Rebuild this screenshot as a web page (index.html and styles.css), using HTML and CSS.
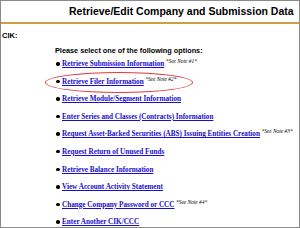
FILE: index.html
```html
<!DOCTYPE html>
<html lang="en">
<head>
    <meta charset="UTF-8">
    <title>Retrieve/Edit Company and Submission Data</title>
    <link rel="stylesheet" href="styles.css">
</head>
<body>
<div class="frame">
    <div class="header">
        <h1>Retrieve/Edit Company and Submission Data</h1>
    </div>
    <div class="cik">CIK:</div>
    <p class="prompt">Please select one of the following options:</p>
    <ul class="options">
        <li><a href="#">Retrieve Submission Information</a><sup>*See Note #1*</sup></li>
        <li><a href="#">Retrieve Filer Information</a><sup>*See Note #2*</sup><span class="ring"></span></li>
        <li><a href="#">Retrieve Module/Segment Information</a></li>
        <li><a href="#">Enter Series and Classes (Contracts) Information</a></li>
        <li><a href="#">Request Asset-Backed Securities (ABS) Issuing Entities Creation</a><sup>*See Note #3*</sup></li>
        <li><a href="#">Request Return of Unused Funds</a></li>
        <li><a href="#">Retrieve Balance Information</a></li>
        <li><a href="#">View Account Activity Statement</a></li>
        <li><a href="#">Change Company Password or CCC</a><sup>*See Note #4*</sup></li>
        <li><a href="#">Enter Another CIK/CCC</a></li>
    </ul>
</div>
</body>
</html>
```

FILE: styles.css
```css
html, body {
    margin: 0;
    padding: 0;
    background: #fff;
}
.frame {
    width: 298px;
    height: 226px;
    border: 1px solid #8a8a8a;
    border-right-width: 2px;
    overflow: hidden;
    font-family: "Liberation Sans", Arial, sans-serif;
}
.header {
    height: 21px;
    border-bottom: 2px solid #c9a13f;
    padding-left: 68px;
}
h1 {
    margin: 0;
    font-size: 10.5px;
    line-height: 20px;
    font-weight: bold;
    color: #000;
}
.cik {
    font-size: 7.5px;
    font-weight: bold;
    margin: 7px 0 0 1px;
}
.prompt {
    font-size: 7.3px;
    font-weight: bold;
    margin: 6px 0 0 54px;
}
.options {
    list-style: none;
    margin: 1px 0 0 0;
    padding: 0 0 0 55px;
}
.options li {
    position: relative;
    height: 17.6px;
    line-height: 17.6px;
    font-family: "Liberation Serif", "Times New Roman", serif;
    font-size: 7.2px;
    padding-left: 6px;
    white-space: nowrap;
}
.options li::before {
    content: "";
    position: absolute;
    left: 0;
    top: 6px;
    width: 3.5px;
    height: 3.5px;
    border-radius: 50%;
    background: #000;
}
.options a {
    color: #1a0dcc;
    font-weight: bold;
    text-decoration: underline;
}
.options sup {
    font-style: italic;
    font-size: 5.4px;
    vertical-align: 3px;
    line-height: 0;
    margin-left: 1.5px;
}
.ring {
    position: absolute;
    left: -11px;
    top: -2px;
    width: 146px;
    height: 19px;
    border: 1.3px solid #e0393e;
    border-radius: 50%;
}
```
